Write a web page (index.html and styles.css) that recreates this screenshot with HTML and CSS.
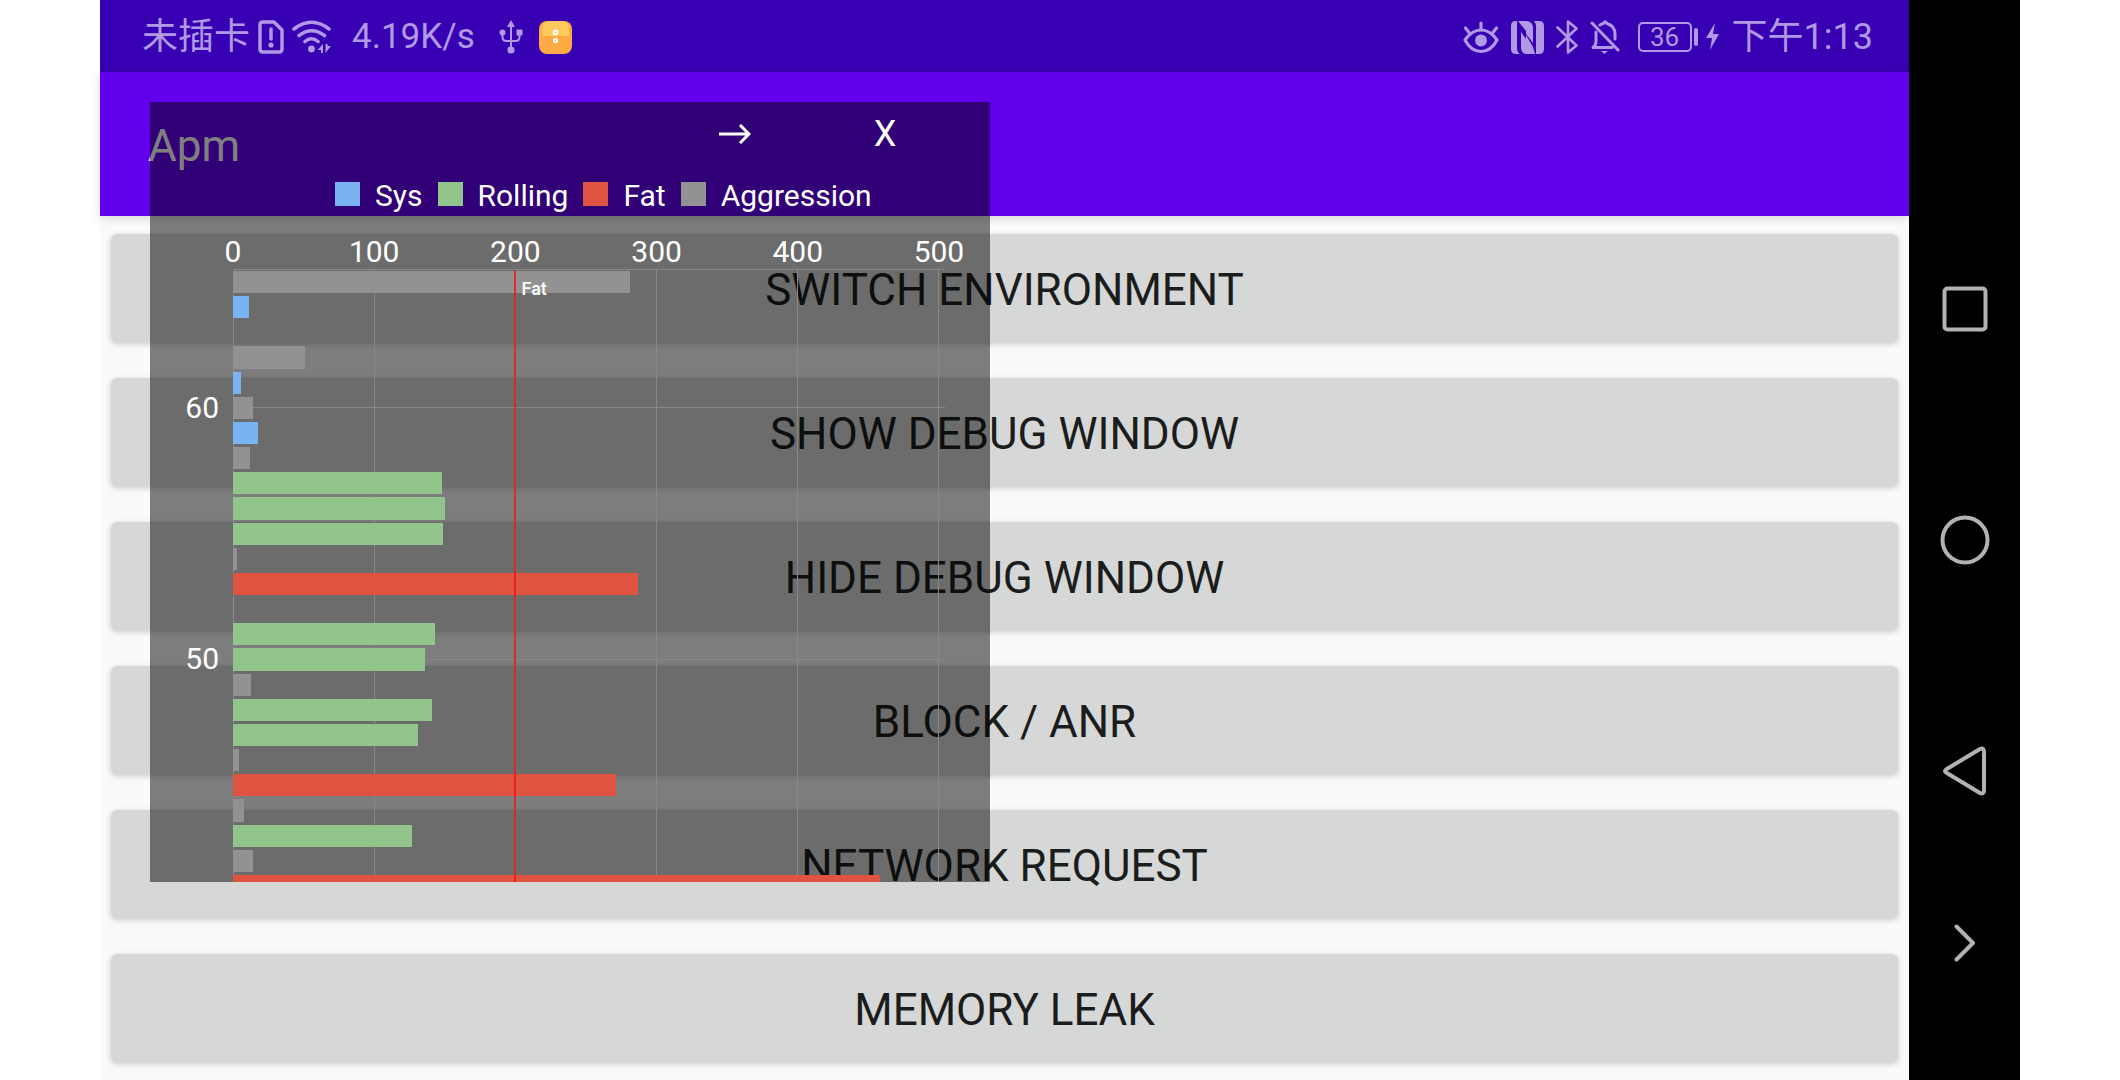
FILE: index.html
```
<!DOCTYPE html>
<html lang="zh-CN">
<head>
    <meta charset="UTF-8">
    <meta name="viewport" content="width=device-width, initial-scale=1.0">
    <title>Apm</title>
    <link rel="stylesheet" href="styles.css">
</head>
<body>
    <div class="device">
        <div class="screen">
            <div class="status-bar">
                <div class="status-group">
                    <span>未插卡</span>
                    <svg width="26" height="34" viewBox="0 0 26 34" fill="none" stroke="currentColor" stroke-width="3.500" stroke-linejoin="round">
                        <path d="M5 2h11l8 8v19q0 3-3 3H5q-3 0-3-3V5q0-3 3-3z"/>
                        <path d="M13 9v10" stroke-linecap="round"/>
                        <circle cx="13" cy="25" r="2.6" fill="currentColor" stroke="none"/>
                    </svg>
                    <svg width="40" height="34" viewBox="0 0 40 34" fill="none" stroke="currentColor" stroke-width="3.6" stroke-linecap="round">
                        <path d="M2 9Q19.500-4.500 37 9M7 15.500Q19.500 6 32.500 15.500M13 21.500Q19.500 16 26 21.500"/>
                        <circle cx="19.500" cy="29" r="3.400" fill="currentColor" stroke="none"/>
                        <path d="M25.500 30l5.500-6v9h-2v-3zM39 26l-5.500 7v-9h2v2z" fill="currentColor" stroke="none"/>
                    </svg>
                </div>
                <span class="speed">4.19K/s</span>
                <div class="status-group wide">
                    <svg width="24" height="36" viewBox="0 0 24 36" fill="none" stroke="currentColor" stroke-width="2">
                        <path d="M12 6v24M3.500 14v4q0 4 4 4h9q4 0 4-4v-4"/>
                        <path d="M12 1l4 7H8z" fill="currentColor" stroke="none"/>
                        <circle cx="3.500" cy="13.500" r="3" fill="currentColor" stroke="none"/>
                        <path d="M17.500 10.500h6v6h-6z" fill="currentColor" stroke="none"/>
                        <circle cx="12" cy="31" r="3.600" fill="currentColor" stroke="none"/>
                    </svg>
                    <svg width="33" height="33" viewBox="0 0 33 33">
                        <rect width="33" height="33" rx="8" fill="#ffab45"/>
                        <path d="M3 15V8q0-8 8-8h11q8 0 8 8v7z" fill="#ffca5c"/>
                        <g fill="none" stroke="#fff" stroke-width="1.800">
                            <circle cx="16.500" cy="11.500" r="2"/>
                            <circle cx="16.500" cy="19.500" r="1.700"/>
                        </g>
                    </svg>
                </div>
                <div class="status-group right">
                    <svg width="36" height="34" viewBox="0 0 36 34" fill="none" stroke="currentColor" stroke-width="3.200" stroke-linecap="round">
                        <path d="M2 20Q9 10 18 10t16 10Q28 31.500 18 31.500T2 20z" stroke-linejoin="round"/>
                        <circle cx="18" cy="20.500" r="6" fill="currentColor" stroke="none"/>
                        <path d="M18 3v6M2.500 8l4 5M33.500 8l-4 5"/>
                    </svg>
                    <svg width="33" height="33" viewBox="0 0 33 33" fill="currentColor">
                        <path d="M5 0h1v27q0 4 3 6H5q-5 0-5-5V5q0-5 5-5z"/>
                        <path d="M7 0h8q7 0 7 8v14l-7-9v-3z"/>
                        <path d="M10 11l5 7v-4l7 12 2 7h-8q-6 0-6-7z"/>
                        <path d="M23 0h5q5 0 5 5v23q0 5-5 5h-3V6q0-4-2-6z"/>
                    </svg>
                    <svg width="22" height="36" viewBox="0 0 22 36" fill="none" stroke="currentColor" stroke-width="2.600" stroke-linecap="round" stroke-linejoin="round">
                        <path d="M1.500 8.500l19 18-8.500 7V2.500l8.500 7-19 18"/>
                    </svg>
                    <svg width="30" height="34" viewBox="0 0 30 34" fill="none" stroke="currentColor" stroke-width="3" stroke-linecap="round" stroke-linejoin="round">
                        <path d="M2 3l26 27M22 27.500H3q3-2 3-6V12M10 5q2-1.500 3.500-1.500Q15 0 17 3.500 25 6 25 14v5"/>
                        <path d="M11 31h7l-3.500 3z" fill="currentColor" stroke="none"/>
                    </svg>
                    <div class="power">
                        <span class="battery">36</span>
                        <svg width="26" height="30" viewBox="0 0 26 30" fill="currentColor">
                            <rect y="6" width="4" height="18" rx="2"/>
                            <path d="M21 1l-9 15h6l-2 12 9-16h-6z"/>
                        </svg>
                    </div>
                    <time>下午1:13</time>
                </div>
            </div>

            <header class="app-bar">
                <h1>Apm</h1>
            </header>

            <main class="actions">
                <button type="button">SWITCH ENVIRONMENT</button>
                <button type="button">SHOW DEBUG WINDOW</button>
                <button type="button">HIDE DEBUG WINDOW</button>
                <button type="button">BLOCK / ANR</button>
                <button type="button">NETWORK REQUEST</button>
                <button type="button">MEMORY LEAK</button>
            </main>

            <!-- floating debug window -->
            <section class="float-window">
                <div class="float-controls">
                    <button type="button" aria-label="Next">
                        <svg width="32" height="20" viewBox="0 0 32 20" fill="none" stroke="currentColor" stroke-width="3">
                            <path d="M0 10h30M21 1l9 9-9 9"/>
                        </svg>
                    </button>
                    <button type="button">X</button>
                </div>
                <ul class="legend">
                    <li class="sys">Sys</li>
                    <li class="rolling">Rolling</li>
                    <li class="fat">Fat</li>
                    <li class="aggression">Aggression</li>
                </ul>
                <div class="chart">
                    <div class="x-axis">
                        <span>0</span>
                        <span>100</span>
                        <span>200</span>
                        <span>300</span>
                        <span>400</span>
                        <span>500</span>
                    </div>
                    <div class="y-axis">
                        <span class="y60">60</span>
                        <span class="y50">50</span>
                    </div>
                    <div class="plot">
                        <div class="grid-lines"><i></i><i></i><i></i><i></i><i></i><i></i></div>
                        <ul class="bars">
                            <li><b class="aggression" style="--ms: 281"></b></li>
                            <li><b class="sys" style="--ms: 11"></b></li>
                            <li></li>
                            <li><b class="aggression" style="--ms: 51"></b></li>
                            <li><b class="sys" style="--ms: 6"></b></li>
                            <li class="major"><b class="aggression" style="--ms: 14"></b></li>
                            <li><b class="sys" style="--ms: 18"></b></li>
                            <li><b class="aggression" style="--ms: 12"></b></li>
                            <li><b class="rolling" style="--ms: 148"></b></li>
                            <li><b class="rolling" style="--ms: 150"></b></li>
                            <li><b class="rolling" style="--ms: 149"></b></li>
                            <li><b class="aggression" style="--ms: 3"></b></li>
                            <li><b class="fat" style="--ms: 287"></b></li>
                            <li><b class="aggression" style="--ms: 1"></b></li>
                            <li><b class="rolling" style="--ms: 143"></b></li>
                            <li class="major"><b class="rolling" style="--ms: 136"></b></li>
                            <li><b class="aggression" style="--ms: 13"></b></li>
                            <li><b class="rolling" style="--ms: 141"></b></li>
                            <li><b class="rolling" style="--ms: 131"></b></li>
                            <li><b class="aggression" style="--ms: 4"></b></li>
                            <li><b class="fat" style="--ms: 271"></b></li>
                            <li><b class="aggression" style="--ms: 8"></b></li>
                            <li><b class="rolling" style="--ms: 127"></b></li>
                            <li><b class="aggression" style="--ms: 14"></b></li>
                            <li><b class="fat" style="--ms: 458"></b></li>
                        </ul>
                        <div class="limit" style="--ms: 200">Fat</div>
                    </div>
                </div>
            </section>
        </div>

        <nav class="nav-bar">
            <button type="button" aria-label="Recents">
                <svg width="46" height="46" viewBox="0 0 46 46"><rect x="2.500" y="2.500" width="41" height="41" rx="3"/></svg>
            </button>
            <button type="button" aria-label="Home">
                <svg width="50" height="50" viewBox="0 0 50 50"><circle cx="25" cy="25" r="22.500"/></svg>
            </button>
            <button type="button" aria-label="Back">
                <svg width="44" height="50" viewBox="0 0 44 50"><path d="M3 23.500L37 3q4-1.500 4 2.500v39q0 4-4 2.500L3 26.500q-2-1.500 0-3z"/></svg>
            </button>
            <button type="button" aria-label="Hide" class="small">
                <svg width="22" height="38" viewBox="0 0 22 38"><path d="M2.500 2.500L19 19 2.500 35.500"/></svg>
            </button>
        </nav>
    </div>
</body>
</html>
```
FILE: styles.css
```
* {
    box-sizing: border-box;
}
body {
    margin: 0;
    background: #fff;
    font-family: Roboto, "Noto Sans CJK SC", sans-serif;
}
button {
    padding: 0;
    border: none;
    background: none;
    color: inherit;
    font: inherit;
    cursor: pointer;
}
ul {
    margin: 0;
    padding: 0;
    list-style: none;
}
svg {
    display: block;
    flex: none;
}
.device {
    display: flex;
    min-height: 100vh;
    margin: 0 100px;
}
.screen {
    position: relative;
    flex: 1;
    background: #fafafa;
}

/* status bar */
.status-bar {
    display: flex;
    align-items: center;
    gap: 20px;
    height: 72px;
    padding: 2px 36px 0 42px;
    background: #3700b3;
    color: #b199e6;
    font-size: 36px;
    line-height: 70px;
    white-space: nowrap;
}
.speed {
    font-size: 35px;
}
.status-group {
    display: flex;
    align-items: center;
    gap: 8px;
}
.status-group.wide {
    gap: 16px;
    padding-left: 4px;
}
.status-group.right {
    gap: 12px;
    margin-left: auto;
}
.power {
    display: flex;
    align-items: center;
    gap: 2px;
    padding-left: 6px;
}
.battery {
    width: 54px;
    height: 30px;
    border: 2px solid currentColor;
    border-radius: 5px;
    font-size: 26px;
    line-height: 27px;
    text-align: center;
}

.app-bar {
    position: relative;
    display: flex;
    align-items: center;
    height: 144px;
    padding: 4px 48px 0;
    background: #6200ee;
    box-shadow: 0 2px 10px rgba(0, 0, 0, 0.15);
    color: #fff;
}
.app-bar h1 {
    margin: 0;
    font-size: 44px;
    font-weight: 400;
}

.actions {
    display: flex;
    flex-direction: column;
    gap: 36px;
    padding: 18px 11px;
}
.actions button {
    height: 108px;
    padding-top: 4px;
    border-radius: 6px;
    background: #d6d8d7;
    box-shadow: 0 2px 6px rgba(0, 0, 0, 0.2);
    color: #1b1c1c;
    font-size: 44px;
}

/* debug window, drawn over the app */
.float-window {
    position: absolute;
    top: 102px;
    left: 50px;
    display: flex;
    flex-direction: column;
    width: 840px;
    height: 780px;
    overflow: hidden;
    background: rgba(0, 0, 0, 0.5);
    color: #fff;
    font-size: 30px;
}
.float-controls {
    display: flex;
    justify-content: flex-end;
    padding-right: 30px;
}
.float-controls button {
    display: flex;
    align-items: center;
    justify-content: center;
    width: 150px;
    height: 64px;
    font-size: 36px;
}
.legend {
    display: flex;
    gap: 15px;
    padding: 10px 0 0 185px;
}
.legend li {
    display: flex;
    align-items: flex-end;
    gap: 15px;
    height: 36px;
    line-height: 32px;
}
.legend li::before {
    content: "";
    width: 25px;
    height: 24px;
    margin-bottom: 6px;
    background: var(--bar);
}
.sys {
    --bar: #79b3f2;
}
.rolling {
    --bar: #92c58c;
}
.fat {
    --bar: #df5341;
}
.aggression {
    --bar: #929292;
}

.chart {
    display: grid;
    grid-template-columns: 83px 712px;
    grid-template-rows: 57px 613px;
}
.x-axis {
    grid-column: 2;
    display: flex;
    justify-content: space-between;
    width: 706px;
    padding-top: 20px;
    line-height: 40px;
}
.x-axis span {
    display: flex;
    justify-content: center;
    width: 0;
}
.y-axis,
.bars {
    display: grid;
    grid-template-rows: repeat(25, 1fr);
    gap: 3px;
    height: 626px;
    margin-top: 2px;
}
.y-axis {
    padding-right: 14px;
    line-height: 22px;
    text-align: right;
}
.y60 {
    grid-row: 6;
}
.y50 {
    grid-row: 16;
}
.plot {
    position: relative;
    border-top: 1px solid #888;
}
.grid-lines {
    position: absolute;
    inset: 0;
    display: flex;
    justify-content: space-between;
    width: 706px;
}
.grid-lines i {
    width: 1px;
    background: #888;
}
.bars {
    position: relative;
    margin-top: 1px;
}
.bars li {
    display: flex;
    align-items: center;
}
.bars b {
    width: calc(var(--ms) / 504 * 100%);
    height: 100%;
    background: var(--bar);
}
.major::after {
    content: "";
    flex: 1;
    height: 1px;
    background: #888;
}
.limit {
    position: absolute;
    top: 0;
    bottom: 0;
    left: calc(var(--ms) / 504 * 100% - 2px);
    padding: 9px 0 0 6px;
    border-left: 2px solid rgba(240, 20, 20, 0.8);
    font-size: 18px;
    font-weight: 500;
    line-height: 20px;
}

/* system navigation */
.nav-bar {
    display: flex;
    flex-direction: column;
    width: 111px;
    padding-top: 193px;
    background: #000;
}
.nav-bar button {
    display: flex;
    align-items: center;
    justify-content: center;
    height: 231px;
}
.nav-bar .small {
    height: 114px;
}
.nav-bar svg {
    fill: none;
    stroke: #b2b2b2;
    stroke-width: 4;
    stroke-linecap: round;
    stroke-linejoin: round;
}
```
